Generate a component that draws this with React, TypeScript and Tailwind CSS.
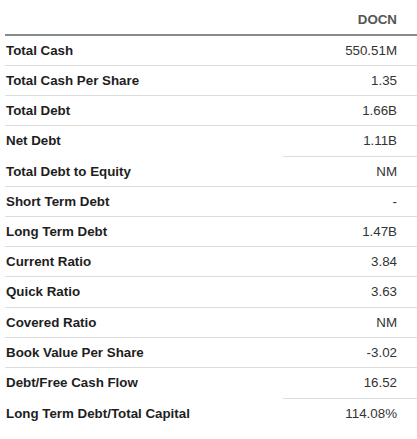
const rows: { label: string; value: string; noLeftLine?: boolean; tall?: boolean }[] = [
  { label: "Total Cash", value: "550.51M" },
  { label: "Total Cash Per Share", value: "1.35" },
  { label: "Total Debt", value: "1.66B" },
  { label: "Net Debt", value: "1.11B", noLeftLine: true, tall: true },
  { label: "Total Debt to Equity", value: "NM" },
  { label: "Short Term Debt", value: "-" },
  { label: "Long Term Debt", value: "1.47B" },
  { label: "Current Ratio", value: "3.84" },
  { label: "Quick Ratio", value: "3.63", tall: true },
  { label: "Covered Ratio", value: "NM" },
  { label: "Book Value Per Share", value: "-3.02" },
  { label: "Debt/Free Cash Flow", value: "16.52", noLeftLine: true, tall: true },
  { label: "Long Term Debt/Total Capital", value: "114.08%" },
];

export default function App() {
  return (
    <div className="w-[417px] h-[439px] bg-white pl-[5px] font-['Liberation_Sans',Arial,sans-serif] text-[13.33px] leading-[15px]">
      <div className="flex h-[36px] border-b-2 border-[#858c89]">
        <div className="w-[278px]" />
        <div className="flex-1 pt-[12px] pr-[20px] text-right font-bold text-[#555]">DOCN</div>
      </div>

      {rows.map((r, i) => {
        const last = i === rows.length - 1;
        return (
          <div key={r.label} className={"flex " + (r.tall ? "h-[31px]" : "h-[30px]")}>
            <div
              className={
                "w-[278px] pl-[1px] pt-[7px] font-bold text-[#1e1e1e] " +
                (last ? "" : r.noLeftLine ? "border-b border-transparent" : "border-b border-[#dcdcdc]")
              }
            >
              {r.label}
            </div>
            <div
              className={
                "flex-1 pt-[7px] pr-[20px] text-right text-[#333] " +
                (last ? "" : "border-b border-[#dcdcdc]")
              }
            >
              {r.value}
            </div>
          </div>
        );
      })}
    </div>
  );
}
